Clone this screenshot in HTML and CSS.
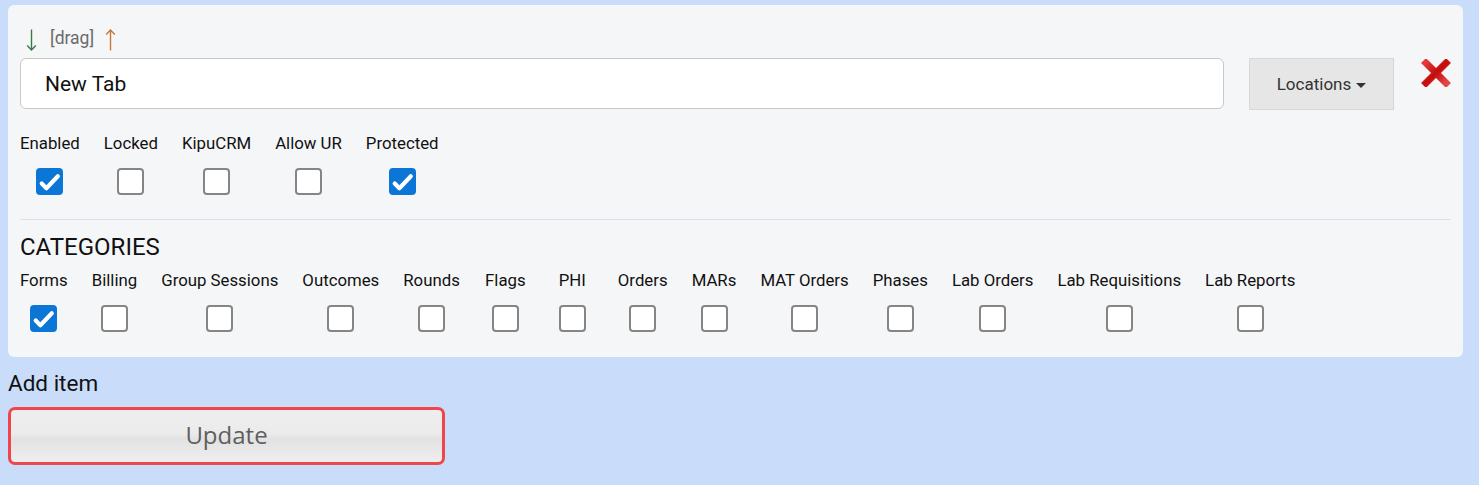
FILE: index.html
```html
<!DOCTYPE html>
<html>
<head>
<meta charset="utf-8">
<link rel="stylesheet" href="styles.css">
</head>
<body>
<div class="card">
  <div class="drag-row">
    <svg class="arrow" width="11" height="22" viewBox="0 0 11 22"><path d="M5.5 0.5 V21 M1.2 16.5 L5.5 21 L9.8 16.5" stroke="#3b7a45" stroke-width="1.4" fill="none"/></svg>
    <span class="drag">[drag]</span>
    <svg class="arrow" width="11" height="22" viewBox="0 0 11 22"><path d="M5.5 21.5 V1 M1.2 5.5 L5.5 1 L9.8 5.5" stroke="#c8773a" stroke-width="1.4" fill="none"/></svg>
  </div>
  <div class="top-row">
    <input class="name" type="text" value="New Tab">
    <button class="loc">Locations <span class="caret"></span></button>
    <span class="del">
      <svg width="30" height="28" viewBox="0 0 30 28">
        <defs>
          <linearGradient id="xg" x1="0" y1="0" x2="1" y2="1">
            <stop offset="0" stop-color="#e23a3a"/>
            <stop offset="0.5" stop-color="#c40c0c"/>
            <stop offset="1" stop-color="#e24848"/>
          </linearGradient>
        </defs>
        <path d="M5 4 L25 24 M25 4 L5 24" stroke="url(#xg)" stroke-width="7" stroke-linecap="square" fill="none"/>
      </svg>
    </span>
  </div>
  <div class="checks">
    <div class="item"><span class="lbl">Enabled</span><span class="cb on"><svg viewBox="0 0 26 26"><path d="M5.5 15 L10 19.5 L21 8" stroke="#fff" stroke-width="4" fill="none" stroke-linecap="round" stroke-linejoin="round"/></svg></span></div>
    <div class="item"><span class="lbl">Locked</span><span class="cb"></span></div>
    <div class="item"><span class="lbl">KipuCRM</span><span class="cb"></span></div>
    <div class="item"><span class="lbl">Allow UR</span><span class="cb"></span></div>
    <div class="item"><span class="lbl">Protected</span><span class="cb on"><svg viewBox="0 0 26 26"><path d="M5.5 15 L10 19.5 L21 8" stroke="#fff" stroke-width="4" fill="none" stroke-linecap="round" stroke-linejoin="round"/></svg></span></div>
  </div>
  <div class="sep"></div>
  <div class="cat-title">CATEGORIES</div>
  <div class="checks cats">
    <div class="item"><span class="lbl">Forms</span><span class="cb on"><svg viewBox="0 0 26 26"><path d="M5.5 15 L10 19.5 L21 8" stroke="#fff" stroke-width="4" fill="none" stroke-linecap="round" stroke-linejoin="round"/></svg></span></div>
    <div class="item"><span class="lbl">Billing</span><span class="cb"></span></div>
    <div class="item"><span class="lbl">Group Sessions</span><span class="cb"></span></div>
    <div class="item"><span class="lbl">Outcomes</span><span class="cb"></span></div>
    <div class="item"><span class="lbl">Rounds</span><span class="cb"></span></div>
    <div class="item"><span class="lbl">Flags</span><span class="cb"></span></div>
    <div class="item"><span class="lbl">PHI</span><span class="cb"></span></div>
    <div class="item"><span class="lbl">Orders</span><span class="cb"></span></div>
    <div class="item"><span class="lbl">MARs</span><span class="cb"></span></div>
    <div class="item"><span class="lbl">MAT Orders</span><span class="cb"></span></div>
    <div class="item"><span class="lbl">Phases</span><span class="cb"></span></div>
    <div class="item"><span class="lbl">Lab Orders</span><span class="cb"></span></div>
    <div class="item"><span class="lbl">Lab Requisitions</span><span class="cb"></span></div>
    <div class="item"><span class="lbl">Lab Reports</span><span class="cb"></span></div>
  </div>
</div>
<div class="add">Add item</div>
<button class="update">Update</button>
</body>
</html>
```

FILE: styles.css
```css
html, body {
  margin: 0;
  padding: 0;
}
body {
  background: #c9ddfb;
  font-family: Roboto, "Liberation Sans", sans-serif;
  color: #111;
  padding: 5px 0 0 8px;
  height: 485px;
  box-sizing: border-box;
  overflow: hidden;
}
.card {
  width: 1455px;
  box-sizing: border-box;
  background: #f5f6f8;
  border-radius: 6px;
  padding: 22px 12px 25px 12px;
}
.drag-row {
  display: flex;
  align-items: center;
  height: 24px;
}
.arrow {
  display: block;
  position: relative;
  top: 1px;
}
.arrow:first-child {
  margin-left: 6px;
}
.drag {
  font-size: 17.5px;
  color: #6b6b6b;
  margin: 0 11px 0 13px;
  position: relative;
  top: -1px;
}
.top-row {
  display: flex;
  align-items: flex-start;
  margin-top: 7px;
}
.name {
  flex: 1;
  height: 51px;
  box-sizing: border-box;
  border: 1px solid #c8c8c8;
  border-radius: 6px;
  background: #fff;
  padding: 0 0 0 24px;
  font-family: Roboto, sans-serif;
  font-size: 21px;
  color: #111;
  outline: none;
}
.loc {
  margin-left: 25px;
  width: 145px;
  height: 52px;
  box-sizing: border-box;
  background: #e6e6e6;
  border: 1px solid #d6d6d6;
  font-family: Roboto, sans-serif;
  font-size: 17px;
  color: #333;
  padding: 0;
  display: flex;
  align-items: center;
  justify-content: center;
  gap: 5px;
}
.caret {
  display: inline-block;
  width: 0;
  height: 0;
  border-left: 5px solid transparent;
  border-right: 5px solid transparent;
  border-top: 5px solid #333;
  margin-top: 2px;
}
.del {
  margin-left: 27px;
  margin-top: 1px;
  width: 30px;
  height: 28px;
  display: flex;
}
.checks {
  display: flex;
  gap: 24px;
  margin-top: 23px;
}
.item {
  display: flex;
  flex-direction: column;
  align-items: center;
  min-width: 43px;
}
.lbl {
  font-size: 16.8px;
  line-height: 20px;
  color: #111;
  white-space: nowrap;
}
.cb {
  margin-top: 15px;
  width: 27px;
  height: 27px;
  box-sizing: border-box;
  border: 2px solid #858585;
  border-radius: 4px;
  background: #fff;
  display: block;
}
.cb.on {
  background: #0b76d6;
  border-color: #0b76d6;
}
.cb svg {
  display: block;
  width: 27px;
  height: 27px;
  margin: -2px;
}
.sep {
  height: 1px;
  background: #d4e0f2;
  margin-top: 24px;
  margin-right: 1px;
}
.cat-title {
  font-size: 24px;
  line-height: 26px;
  margin-top: 14px;
  color: #111;
}
.cats {
  margin-top: 10px;
}
.add {
  font-size: 22.5px;
  line-height: 24px;
  margin-top: 14px;
  color: #111;
}
.update {
  margin-top: 12px;
  width: 437px;
  height: 58px;
  box-sizing: border-box;
  border: 3px solid #f0464b;
  border-radius: 7px;
  background: linear-gradient(#eeeeee 0%, #ebebeb 45%, #e2e2e2 55%, #eeeeee 100%);
  font-family: "Open Sans", sans-serif;
  font-size: 24px;
  color: #5f5f5f;
  padding: 0 0 4px 0;
}
```
